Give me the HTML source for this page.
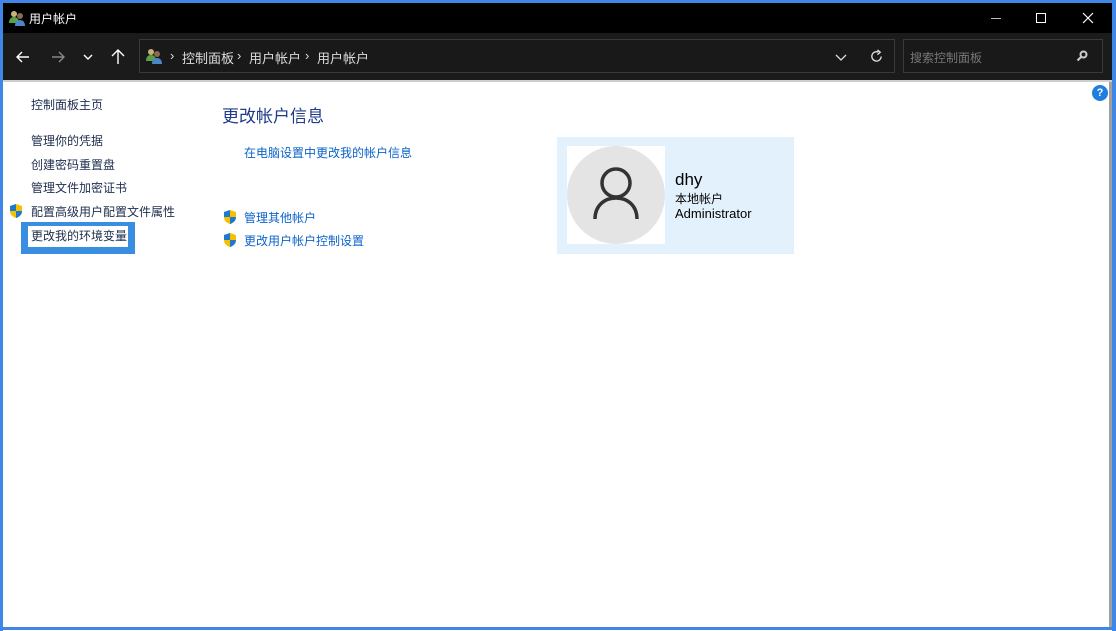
<!DOCTYPE html>
<html><head><meta charset="utf-8"><style>
*{margin:0;padding:0;box-sizing:border-box}
body{width:1116px;height:631px;overflow:hidden;background:#fff;position:relative;font-family:"Liberation Sans","Noto Sans CJK SC",sans-serif;font-size:12px}
.a{position:absolute}
.l{color:#1e2d4e;white-space:nowrap}
.b{color:#0b63c9;white-space:nowrap}
</style></head><body>
<div class="a" style="left:0;top:0;width:1116px;height:3px;background:#3f86e6"></div>
<div class="a" style="left:0;top:0;width:3px;height:631px;background:#3f86e6"></div>
<div class="a" style="left:1112px;top:0;width:4px;height:631px;background:#3f86e6"></div>
<div class="a" style="left:1109px;top:82px;width:3px;height:545px;background:#a0a0a0"></div>
<div class="a" style="left:0;top:627px;width:1116px;height:3px;background:#3f86e6"></div>
<div class="a" style="left:3px;top:3px;width:1109px;height:30px;background:#000"></div>
<svg class="a" style="left:9px;top:10px" width="16" height="16" viewBox="0 0 16 16"><circle cx="5" cy="4" r="3" fill="#c9b27a"/><path d="M0 13c0-4 2-6 5-6s5 2 5 6z" fill="#5aa048"/><circle cx="11" cy="6" r="3" fill="#8a6a50"/><path d="M6 16c0-4 2-6 5-6s5 2 5 6z" fill="#4a86c8"/></svg>
<div class="a" style="left:29px;top:10px;color:#fff;font-size:12px">用户帐户</div>
<div class="a" style="left:991px;top:18px;width:10px;height:1px;background:#bbb"></div>
<div class="a" style="left:1036px;top:13px;width:10px;height:10px;border:1px solid #fff"></div>
<svg class="a" style="left:1082px;top:12px" width="12" height="12"><path d="M1 1L11 11M11 1L1 11" stroke="#fff" stroke-width="1.2"/></svg>
<div class="a" style="left:3px;top:33px;width:1109px;height:47px;background:#1b1b1b"></div>
<div class="a" style="left:3px;top:80px;width:1109px;height:2px;background:#cfcfcf"></div>
<svg class="a" style="left:15px;top:49px" width="16" height="16"><path d="M14 8H2M7 3L2 8L7 13" stroke="#fff" stroke-width="1.4" fill="none"/></svg>
<svg class="a" style="left:50px;top:49px" width="16" height="16"><path d="M2 8H14M9 3L14 8L9 13" stroke="#888" stroke-width="1.4" fill="none"/></svg>
<svg class="a" style="left:82px;top:51px" width="12" height="12"><path d="M2 4L6 8L10 4" stroke="#fff" stroke-width="1.4" fill="none"/></svg>
<svg class="a" style="left:110px;top:48px" width="16" height="18"><path d="M8 16V2M2 8L8 2L14 8" stroke="#fff" stroke-width="1.4" fill="none"/></svg>
<div class="a" style="left:139px;top:39px;width:756px;height:34px;border:1px solid #3a3a3a;background:#191919"></div>
<svg class="a" style="left:146px;top:48px" width="16" height="16" viewBox="0 0 16 16"><circle cx="5" cy="4" r="3" fill="#c9b27a"/><path d="M0 13c0-4 2-6 5-6s5 2 5 6z" fill="#5aa048"/><circle cx="11" cy="6" r="3" fill="#8a6a50"/><path d="M6 16c0-4 2-6 5-6s5 2 5 6z" fill="#4a86c8"/></svg>
<div class="a" style="left:170px;top:48px;color:#ddd;font-size:13px">›</div>
<div class="a" style="left:182px;top:48px;color:#ddd;font-size:13px">控制面板</div>
<div class="a" style="left:237px;top:48px;color:#ddd;font-size:13px">›</div>
<div class="a" style="left:249px;top:48px;color:#ddd;font-size:13px">用户帐户</div>
<div class="a" style="left:305px;top:48px;color:#ddd;font-size:13px">›</div>
<div class="a" style="left:317px;top:48px;color:#ddd;font-size:13px">用户帐户</div>
<svg class="a" style="left:835px;top:51px" width="12" height="12"><path d="M1 4L6 9L11 4" stroke="#ddd" stroke-width="1.3" fill="none"/></svg>
<svg class="a" style="left:869px;top:49px" width="15" height="15" viewBox="0 0 16 16"><path d="M13 8A5 5 0 1 1 10 3.3" stroke="#ddd" stroke-width="1.4" fill="none"/><path d="M9 1L12 3.5L9 6" stroke="#ddd" stroke-width="1.4" fill="none"/></svg>
<div class="a" style="left:903px;top:39px;width:200px;height:34px;border:1px solid #3a3a3a;background:#191919"></div>
<div class="a" style="left:910px;top:49px;color:#777;font-size:12px">搜索控制面板</div>
<svg class="a" style="left:1076px;top:50px" width="12" height="12"><circle cx="7.5" cy="4.5" r="3" fill="none" stroke="#ccc" stroke-width="2"/><path d="M5.5 6.5L1.5 10.5" stroke="#ccc" stroke-width="2"/></svg>
<div class="a" style="left:1092px;top:85px;width:16px;height:16px;border-radius:50%;background:#1f7fe0;color:#fff;font-size:11px;font-weight:bold;text-align:center;line-height:16px">?</div>
<div class="a l" style="left:31px;top:96px">控制面板主页</div>
<div class="a l" style="left:31px;top:132px">管理你的凭据</div>
<div class="a l" style="left:31px;top:156px">创建密码重置盘</div>
<div class="a l" style="left:31px;top:179px">管理文件加密证书</div>
<svg class="a" style="left:8px;top:203px" width="16" height="16" viewBox="0 0 16 16"><path d="M8 1L2 3V8C2 12 5 14 8 15C11 14 14 12 14 8V3Z" fill="#f5c000"/><path d="M8 1L2 3V8H8Z" fill="#1f78d0"/><path d="M8 8H14C14 12 11 14 8 15Z" fill="#1f78d0"/></svg>
<div class="a l" style="left:31px;top:203px">配置高级用户配置文件属性</div>
<div class="a" style="left:21px;top:222px;width:114px;height:32px;background:#3a8ee2"></div>
<div class="a" style="left:28px;top:226px;width:100px;height:21px;background:#fff"></div>
<div class="a l" style="left:31px;top:227px">更改我的环境变量</div>
<div class="a" style="left:222px;top:102px;color:#1e3a8a;font-size:17px">更改帐户信息</div>
<div class="a b" style="left:244px;top:144px">在电脑设置中更改我的帐户信息</div>
<svg class="a" style="left:222px;top:209px" width="16" height="16" viewBox="0 0 16 16"><path d="M8 1L2 3V8C2 12 5 14 8 15C11 14 14 12 14 8V3Z" fill="#f5c000"/><path d="M8 1L2 3V8H8Z" fill="#1f78d0"/><path d="M8 8H14C14 12 11 14 8 15Z" fill="#1f78d0"/></svg>
<div class="a b" style="left:244px;top:209px">管理其他帐户</div>
<svg class="a" style="left:222px;top:232px" width="16" height="16" viewBox="0 0 16 16"><path d="M8 1L2 3V8C2 12 5 14 8 15C11 14 14 12 14 8V3Z" fill="#f5c000"/><path d="M8 1L2 3V8H8Z" fill="#1f78d0"/><path d="M8 8H14C14 12 11 14 8 15Z" fill="#1f78d0"/></svg>
<div class="a b" style="left:244px;top:232px">更改用户帐户控制设置</div>
<div class="a" style="left:557px;top:137px;width:237px;height:117px;background:#e3f1fd"></div>
<div class="a" style="left:567px;top:146px;width:98px;height:98px;background:#fff"></div>
<div class="a" style="left:567px;top:146px;width:98px;height:98px;border-radius:50%;background:#e4e4e4"></div>
<svg class="a" style="left:567px;top:146px" width="98" height="98"><circle cx="49" cy="37" r="14" fill="none" stroke="#333" stroke-width="3.5"/><path d="M28 73C28 60 37 52 49 52S70 60 70 73" fill="none" stroke="#333" stroke-width="3.5"/></svg>
<div class="a" style="left:675px;top:170px;color:#000;font-size:17px">dhy</div>
<div class="a" style="left:675px;top:190px;color:#000;font-size:12px">本地帐户</div>
<div class="a" style="left:675px;top:206px;color:#000;font-size:13px">Administrator</div>
</body></html>
